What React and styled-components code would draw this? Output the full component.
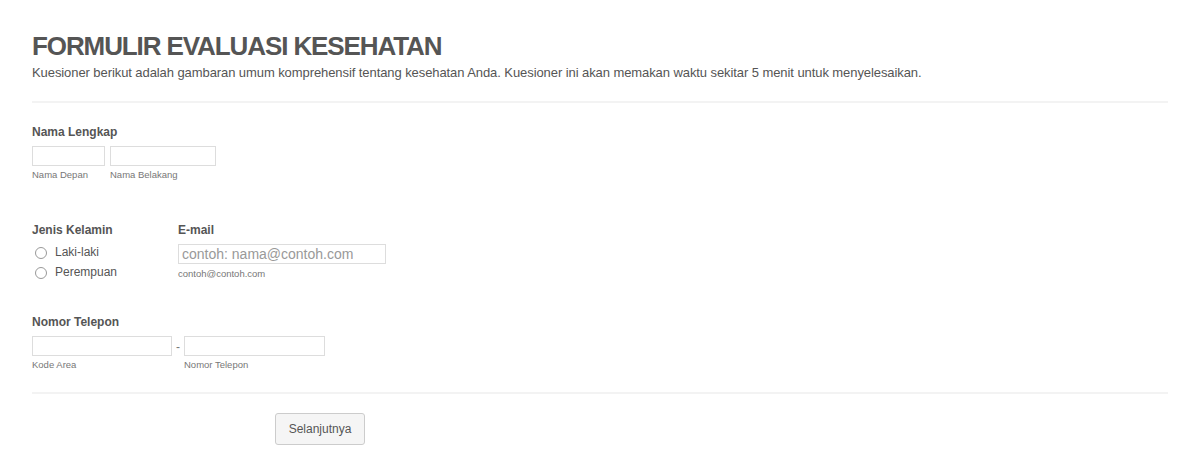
import React from 'react';
import styled, { createGlobalStyle } from 'styled-components';

const GlobalStyle = createGlobalStyle`
  body {
    margin: 0;
    background: #fff;
    font-family: "Liberation Sans", Arial, sans-serif;
    color: #555;
  }
`;

const Page = styled.div`
  padding: 30px 32px 0 32px;
  width: 1136px;
`;

const Header = styled.div`
  padding-bottom: 19px;
  border-bottom: 2px solid #f3f3f3;
`;

const Title = styled.h1`
  margin: 0;
  font-size: 26px;
  line-height: 32px;
  font-weight: 700;
  letter-spacing: -1.1px;
  color: #555;
`;

const Subtitle = styled.div`
  margin-top: 2px;
  font-size: 13px;
  line-height: 18px;
  letter-spacing: -0.08px;
  color: #555;
`;

const Section = styled.div`
  display: flex;
  margin-top: ${p => p.top || 0}px;
`;

const Field = styled.div`
  display: flex;
  flex-direction: column;
  width: ${p => (p.width ? `${p.width}px` : 'auto')};
`;

const Label = styled.div`
  font-size: 12px;
  font-weight: 700;
  line-height: 16px;
  color: #555;
  margin-bottom: 6px;
`;

const Row = styled.div`
  display: flex;
  align-items: flex-start;
  gap: ${p => p.gap || 5}px;
`;

const InputGroup = styled.div`
  display: flex;
  flex-direction: column;
`;

const TextInput = styled.input`
  box-sizing: border-box;
  width: ${p => p.width}px;
  height: 20px;
  border: 1px solid #ddd;
  border-radius: 0;
  padding: 0 3px;
  margin: 0;
  font-family: "Liberation Sans", Arial, sans-serif;
  font-size: 14px;
  color: #555;
  outline: none;

  &::placeholder {
    color: #999;
  }
`;

const SubLabel = styled.span`
  font-size: 9.5px;
  line-height: 12px;
  margin-top: ${p => p.top || 3}px;
  color: #777;
`;

const Dash = styled.span`
  font-size: 12px;
  line-height: 22px;
  color: #777;
`;

const RadioList = styled.div`
  display: flex;
  flex-direction: column;
  gap: 4px;
  padding-left: 3px;
`;

const RadioOption = styled.label`
  display: flex;
  align-items: center;
  gap: 8px;
  font-size: 12px;
  line-height: 16px;
  color: #555;
`;

const RadioCircle = styled.span`
  box-sizing: border-box;
  width: 12px;
  height: 12px;
  border: 1px solid #999;
  border-radius: 50%;
  margin-top: 2px;
`;

const Footer = styled.div`
  margin-top: 21px;
  border-top: 2px solid #f3f3f3;
  padding: 19px 0 0 243px;
`;

const NextButton = styled.button`
  box-sizing: border-box;
  width: 90px;
  height: 32px;
  background: #f5f5f5;
  border: 1px solid #ccc;
  border-radius: 3px;
  font-family: "Liberation Sans", Arial, sans-serif;
  font-size: 12px;
  color: #555;
  cursor: pointer;
`;

export default function App() {
  return (
    <>
      <GlobalStyle />
      <Page>
        <Header>
          <Title>FORMULIR EVALUASI KESEHATAN</Title>
          <Subtitle>
            Kuesioner berikut adalah gambaran umum komprehensif tentang kesehatan Anda. Kuesioner ini akan memakan waktu sekitar 5 menit untuk menyelesaikan.
          </Subtitle>
        </Header>

        <Section top={21}>
          <Field>
            <Label>Nama Lengkap</Label>
            <Row gap={5}>
              <InputGroup>
                <TextInput width={73} />
                <SubLabel>Nama Depan</SubLabel>
              </InputGroup>
              <InputGroup>
                <TextInput width={106} />
                <SubLabel>Nama Belakang</SubLabel>
              </InputGroup>
            </Row>
          </Field>
        </Section>

        <Section top={41}>
          <Field width={146}>
            <Label>Jenis Kelamin</Label>
            <RadioList>
              <RadioOption><RadioCircle />Laki-laki</RadioOption>
              <RadioOption><RadioCircle />Perempuan</RadioOption>
            </RadioList>
          </Field>
          <Field>
            <Label>E-mail</Label>
            <InputGroup>
              <TextInput width={208} placeholder="contoh: nama@contoh.com" />
              <SubLabel top={4}>contoh@contoh.com</SubLabel>
            </InputGroup>
          </Field>
        </Section>

        <Section top={34}>
          <Field>
            <Label>Nomor Telepon</Label>
            <Row gap={4}>
              <InputGroup>
                <TextInput width={140} />
                <SubLabel>Kode Area</SubLabel>
              </InputGroup>
              <Dash>-</Dash>
              <InputGroup>
                <TextInput width={141} />
                <SubLabel>Nomor Telepon</SubLabel>
              </InputGroup>
            </Row>
          </Field>
        </Section>

        <Footer>
          <NextButton>Selanjutnya</NextButton>
        </Footer>
      </Page>
    </>
  );
}
